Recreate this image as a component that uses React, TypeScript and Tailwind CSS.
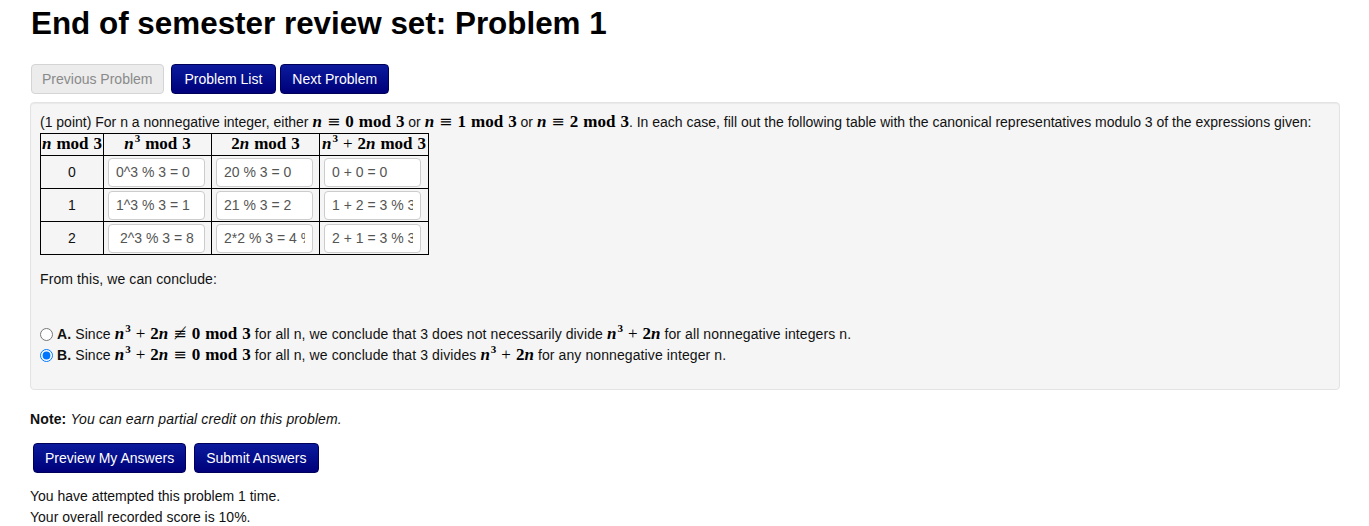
import React from "react";

function N() {
  return <span className="font-bold italic">n</span>;
}

function Mod() {
  return <span className="mx-[5px] font-bold">mod</span>;
}

function Cube() {
  return (
    <span>
      <N />
      <sup className="-top-[7px] ml-[1px] text-[11px] font-bold">3</sup>
    </span>
  );
}

function M({ children }: { children: React.ReactNode }) {
  return (
    <span className="font-['Liberation_Serif','Times_New_Roman',serif] text-[17px] leading-[18px] tracking-normal text-black">
      {children}
    </span>
  );
}

function Rel({ s }: { s: string }) {
  return <span className="mx-[5px] font-['DejaVu_Serif',serif] text-[16px]">{s}</span>;
}

function Congruence({ r }: { r: string }) {
  return (
    <M>
      <N />
      <Rel s="≡" />
      <span className="font-bold">{r}</span>
      <Mod />
      <span className="font-bold">3</span>
    </M>
  );
}

function Sum() {
  return (
    <>
      <Cube />
      <span className="mx-[5px]">+</span>
      <span className="font-bold">2</span>
      <N />
    </>
  );
}

function NavButton({ label, disabled, wide }: { label: string; disabled?: boolean; wide?: boolean }) {
  if (disabled) {
    return (
      <span className="inline-block rounded-[4px] border border-[#d4d4d4] bg-[#ececec] px-[10px] py-[4px] text-[14px] leading-[20px] text-[#8a8a8a]">
        {label}
      </span>
    );
  }
  return (
    <span
      className={
        wide
          ? "inline-block rounded-[4px] border border-[#00005a] bg-gradient-to-b from-[#0c1a9c] to-[#00007a] px-[13px] py-[4px] text-[14px] leading-[20px] text-white"
          : "inline-block rounded-[4px] border border-[#00005a] bg-gradient-to-b from-[#0c1a9c] to-[#00007a] px-[11px] py-[4px] text-[14px] leading-[20px] text-white"
      }
    >
      {label}
    </span>
  );
}

const rows = [
  ["0", "0^3 % 3 = 0", "20 % 3 = 0", "0 + 0 = 0"],
  ["1", "1^3 % 3 = 1", "21 % 3 = 2", "1 + 2 = 3 % 3 = 0"],
  ["2", " 2^3 % 3 = 8 % 3 = 2", "2*2 % 3 = 4 % 3 = 1", "2 + 1 = 3 % 3 = 0"],
];

function Answer({ value }: { value: string }) {
  return (
    <input
      readOnly
      value={value}
      className="h-[29px] w-[97px] rounded-[4px] border border-[#cccccc] bg-white px-[7px] text-[14px] text-[#555] outline-none"
    />
  );
}

export default function App() {
  return (
    <div className="min-h-[526px] bg-white px-[30px] font-['Liberation_Sans',Arial,sans-serif] text-[14px] text-[#111]">
      <h1 className="ml-[1px] pt-[8px] text-[31.4px] font-bold leading-[31px] text-black">
        End of semester review set: Problem 1
      </h1>

      <div className="mt-[25px] flex items-center">
        <span className="ml-[1px]">
          <NavButton label="Previous Problem" disabled />
        </span>
        <span className="ml-[7px]">
          <NavButton label="Problem List" wide />
        </span>
        <span className="ml-[4px]">
          <NavButton label="Next Problem" />
        </span>
      </div>

      <div className="mt-[8px] w-[1310px] rounded-[4px] border border-[#e3e3e3] bg-[#f5f5f5] px-[9px] pb-[23px] pt-[9px] shadow-[inset_0_1px_1px_rgba(0,0,0,0.05)]">
        <p className="whitespace-nowrap leading-[21px]">
          (1 point) For n a nonnegative integer, either <Congruence r="0" /> or <Congruence r="1" /> or{" "}
          <Congruence r="2" />. In each case, fill out the following table with the canonical representatives modulo
          3 of the expressions given:
        </p>

        <table className="border-collapse border border-black">
          <thead>
            <tr className="h-[22px]">
              <th className="w-[63px] border border-black p-0 font-normal">
                <M>
                  <N />
                  <Mod />
                  <span className="font-bold">3</span>
                </M>
              </th>
              <th className="w-[108px] border border-black p-0 font-normal">
                <M>
                  <Cube />
                  <Mod />
                  <span className="font-bold">3</span>
                </M>
              </th>
              <th className="w-[108px] border border-black p-0 font-normal">
                <M>
                  <span className="font-bold">2</span>
                  <N />
                  <Mod />
                  <span className="font-bold">3</span>
                </M>
              </th>
              <th className="w-[109px] border border-black p-0 font-normal">
                <M>
                  <Sum />
                  <Mod />
                  <span className="font-bold">3</span>
                </M>
              </th>
            </tr>
          </thead>
          <tbody>
            {rows.map((r) => (
              <tr key={r[0]} className="h-[33px]">
                <td className="border border-black text-center">{r[0]}</td>
                {r.slice(1).map((v, i) => (
                  <td key={i} className="border border-black px-[4px] py-[1px]">
                    <Answer value={v} />
                  </td>
                ))}
              </tr>
            ))}
          </tbody>
        </table>

        <p className="mt-[14px] leading-[20px] tracking-[0.1px]">From this, we can conclude:</p>

        <div className="mt-[35px] flex flex-col tracking-[0.1px]">
          <label className="flex h-[21px] items-center">
            <input type="radio" name="c" readOnly className="m-0 mr-[4px] h-[13px] w-[13px]" />
            <span>
              <b>A.</b> Since{" "}
              <M>
                <Sum />
                <Rel s="≢" />
                <span className="font-bold">0</span>
                <Mod />
                <span className="font-bold">3</span>
              </M>{" "}
              for all n, we conclude that 3 does not necessarily divide{" "}
              <M>
                <Sum />
              </M>{" "}
              for all nonnegative integers n.
            </span>
          </label>
          <label className="flex h-[21px] items-center">
            <input type="radio" name="c" readOnly checked className="m-0 mr-[4px] h-[13px] w-[13px]" />
            <span>
              <b>B.</b> Since{" "}
              <M>
                <Sum />
                <Rel s="≡" />
                <span className="font-bold">0</span>
                <Mod />
                <span className="font-bold">3</span>
              </M>{" "}
              for all n, we conclude that 3 divides{" "}
              <M>
                <Sum />
              </M>{" "}
              for any nonnegative integer n.
            </span>
          </label>
        </div>
      </div>

      <p className="mt-[19px] leading-[20px] tracking-[0.12px]">
        <b>Note:</b> <i>You can earn partial credit on this problem.</i>
      </p>

      <div className="mt-[14px] flex items-center pl-[3px]">
        <NavButton label="Preview My Answers" />
        <span className="ml-[8px]">
          <NavButton label="Submit Answers" />
        </span>
      </div>

      <div className="mt-[13px] leading-[21px]">
        <p>You have attempted this problem 1 time.</p>
        <p>Your overall recorded score is 10%.</p>
      </div>
    </div>
  );
}
